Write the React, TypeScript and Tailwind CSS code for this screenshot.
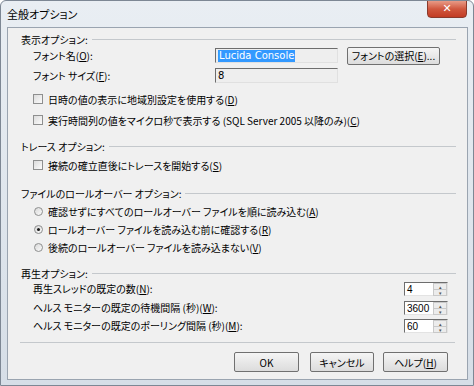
import React from "react";

const jp = "font-['Noto_Sans_CJK_JP','Noto_Sans',sans-serif] [font-feature-settings:'palt']";

function U({ c }: { c: string }) {
  return <span className="underline">{c}</span>;
}

function Header({ title, className = "" }: { title: string; className?: string }) {
  return (
    <div className={"flex h-[16px] items-center pl-[13px] pr-[11px] " + className}>
      <span>{title}</span>
      <div className="ml-[4px] h-px flex-1 bg-[#c4c8cc]" />
    </div>
  );
}

function Check({ children, className = "" }: { children: React.ReactNode; className?: string }) {
  return (
    <div className={"flex h-[16px] items-center pl-[25px] " + className}>
      <span className="h-[10px] w-[10px] border border-[#8e8f8f] bg-gradient-to-br from-[#dcdcdc] to-[#fbfbfb]" />
      <span className="ml-[5px]">{children}</span>
    </div>
  );
}

function Radio({ children, checked = false, className = "" }: { children: React.ReactNode; checked?: boolean; className?: string }) {
  return (
    <div className={"flex h-[16px] items-center pl-[26px] " + className}>
      <span className="flex h-[9px] w-[9px] items-center justify-center rounded-full border border-[#8e8f8f] bg-gradient-to-br from-[#d8d8d8] to-[#fbfbfb]">
        {checked && <span className="h-[3px] w-[3px] rounded-full bg-[#1b1b1b]" />}
      </span>
      <span className="ml-[5px]">{children}</span>
    </div>
  );
}

function Spin({ value }: { value: string }) {
  return (
    <div className="flex h-[14px] w-[44px] border-t border-l border-t-[#6d6d6d] border-l-[#6d6d6d] border-b border-r border-b-[#e3e3e3] border-r-[#e3e3e3] bg-white">
      <span className="flex-1 pl-[2px] text-[10px] leading-[13px] font-['Liberation_Sans',sans-serif]">{value}</span>
      <div className="flex w-[14px] flex-col">
        <span className="flex flex-1 items-center justify-center border border-[#c9c9c9] bg-[#ececec] text-[5px] leading-none text-[#555]">▴</span>
        <span className="flex flex-1 items-center justify-center border border-t-0 border-[#c9c9c9] bg-[#ececec] text-[5px] leading-none text-[#555]">▾</span>
      </div>
    </div>
  );
}

function Btn({ children, className = "" }: { children: React.ReactNode; className?: string }) {
  return (
    <div className={"flex items-center justify-center rounded-[2px] border border-[#707070] bg-gradient-to-b from-[#f5f5f5] to-[#dcdcdc] " + className}>
      {children}
    </div>
  );
}

export default function App() {
  return (
    <div className={"relative h-[386px] w-[474px] overflow-hidden rounded-t-[6px] border border-[#7d8794] bg-gradient-to-b from-[#e9eef3] to-[#d6dee7] text-[10px] text-black " + jp}>
      <div className="flex h-[26px] items-center pl-[6px] text-[11px]">全般オプション</div>
      <div className="absolute right-[6px] top-[-1px] flex h-[18px] w-[40px] items-center justify-center rounded-b-[4px] border border-[#8a3a2c] bg-gradient-to-b from-[#e89a86] via-[#d0573e] to-[#c23c24] text-[11px] font-bold text-white font-['DejaVu_Sans',sans-serif]">
        ✕
      </div>

      <div className="ml-[6px] flex h-[353px] w-[461px] flex-col border border-[#9aa4b0] bg-[#f0f0f0]">
        <Header title="表示オプション:" className="mt-[3px]" />

        <div className="flex h-[17px] items-center pl-[25px]">
          <span className="w-[182px]">フォント名(<U c="O" />):</span>
          <div className="flex h-[15px] w-[123px] items-center border-t border-l border-t-[#6d6d6d] border-l-[#6d6d6d] border-b border-r border-b-[#e0e0e0] border-r-[#e0e0e0] bg-[#eeeeee] pl-[2px]">
            <span className="bg-[#3399ff] px-px text-[10px] leading-[12px] text-white font-['DejaVu_Sans',sans-serif]">Lucida Console</span>
          </div>
          <Btn className="ml-[9px] h-[18px] w-[93px]">
            フォントの選択(<U c="E" />)...
          </Btn>
        </div>

        <div className="mt-[3px] flex h-[17px] items-center pl-[25px]">
          <span className="w-[182px]">フォント サイズ(<U c="F" />):</span>
          <div className="flex h-[15px] w-[123px] items-center border-t border-l border-t-[#6d6d6d] border-l-[#6d6d6d] border-b border-r border-b-[#e0e0e0] border-r-[#e0e0e0] bg-[#eeeeee] pl-[2px]">
            <span className="text-[10px] leading-[12px] font-['DejaVu_Sans',sans-serif]">8</span>
          </div>
        </div>

        <Check className="mt-[7px]">
          日時の値の表示に地域別設定を使用する(<U c="D" />)
        </Check>
        <Check className="mt-[5px]">
          実行時間列の値をマイクロ秒で表示する (SQL Server 2005 以降のみ)(<U c="C" />)
        </Check>

        <Header title="トレース オプション:" className="mt-[10px]" />
        <Check className="mt-[3px]">
          接続の確立直後にトレースを開始する(<U c="S" />)
        </Check>

        <Header title="ファイルのロールオーバー オプション:" className="mt-[12px]" />
        <Radio className="mt-[2px]">
          確認せずにすべてのロールオーバー ファイルを順に読み込む(<U c="A" />)
        </Radio>
        <Radio checked className="mt-[2px]">
          ロールオーバー ファイルを読み込む前に確認する(<U c="R" />)
        </Radio>
        <Radio className="mt-[2px]">
          後続のロールオーバー ファイルを読み込まない(<U c="V" />)
        </Radio>

        <Header title="再生オプション:" className="mt-[10px]" />
        <div className="flex h-[15px] items-center justify-between pl-[25px] pr-[19px]">
          <span>再生スレッドの既定の数(<U c="N" />):</span>
          <Spin value="4" />
        </div>
        <div className="mt-[4px] flex h-[15px] items-center justify-between pl-[25px] pr-[19px]">
          <span>ヘルス モニターの既定の待機間隔 (秒)(<U c="W" />):</span>
          <Spin value="3600" />
        </div>
        <div className="mt-[3px] flex h-[15px] items-center justify-between pl-[25px] pr-[19px]">
          <span>ヘルス モニターの既定のポーリング間隔 (秒)(<U c="M" />):</span>
          <Spin value="60" />
        </div>

        <div className="mx-[12px] mt-[9px] h-px bg-[#c4c8cc]" />

        <div className="mt-[9px] flex h-[20px] justify-end pr-[19px]">
          <Btn className="w-[65px] border-[#3c3c3c]">OK</Btn>
          <Btn className="ml-[11px] w-[64px]">キャンセル</Btn>
          <Btn className="ml-[9px] w-[65px]">
            ヘルプ(<U c="H" />)
          </Btn>
        </div>
      </div>
    </div>
  );
}
